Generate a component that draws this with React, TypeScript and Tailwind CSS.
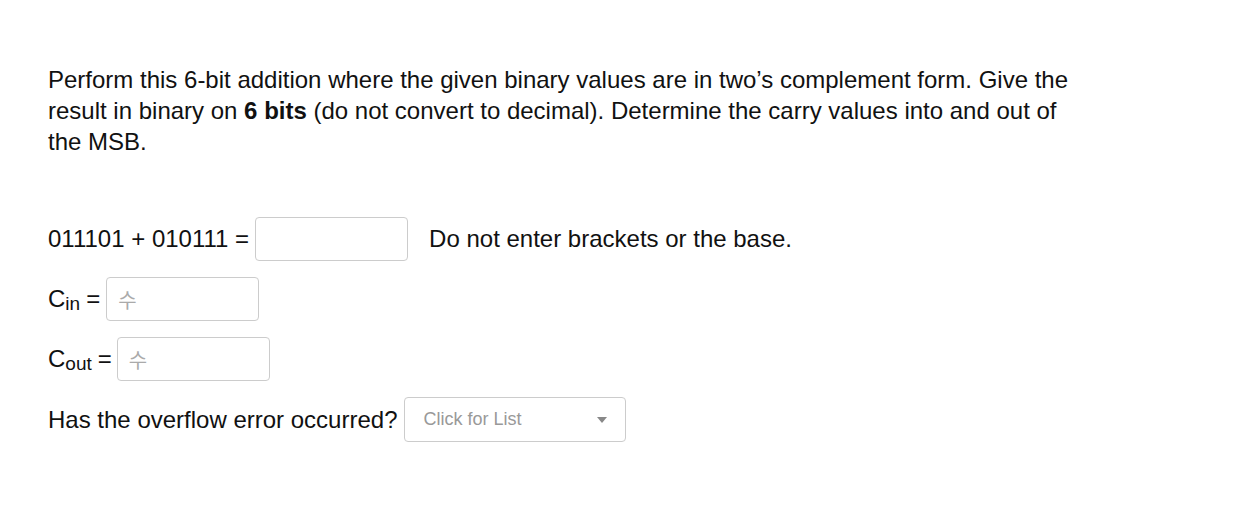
export default function App() {
  const box = 'h-[44px] w-[153px] rounded-[4px] border border-[#cccccc] bg-white';
  return (
    <div className="min-h-screen bg-white pl-[48px] pt-[64px] text-[24px] text-[#111] [font-family:'Liberation_Sans',Arial,sans-serif]">
      <p className="w-[1030px] leading-[31px]">
        Perform this 6-bit addition where the given binary values are in two’s complement form. Give the result in binary
        on <b>6 bits</b> (do not convert to decimal). Determine the carry values into and out of the MSB.
      </p>

      <div className="mt-[60px] flex flex-col gap-[16px]">
        <div className="flex items-center">
          <span>011101 + 010111 =</span>
          <input className={`ml-[6px] ${box}`} />
          <span className="ml-[21px]">Do not enter brackets or the base.</span>
        </div>

        <div className="flex items-center">
          <span>
            C<sub className="relative top-[3px] align-baseline text-[19px]">in</sub>
          </span>
          <span className="ml-[6px]">=</span>
          <input
            className={`ml-[6px] pl-[11px] text-[20px] placeholder:text-[#aaa] [font-family:'Noto_Sans_CJK_KR',sans-serif] ${box}`}
            placeholder="수"
          />
        </div>

        <div className="flex items-center">
          <span>
            C<sub className="relative top-[3px] align-baseline text-[19px]">out</sub>
          </span>
          <span className="ml-[6px]">=</span>
          <input
            className={`ml-[5px] pl-[11px] text-[20px] placeholder:text-[#aaa] [font-family:'Noto_Sans_CJK_KR',sans-serif] ${box}`}
            placeholder="수"
          />
        </div>

        <div className="flex items-center">
          <span>Has the overflow error occurred?</span>
          <div className="ml-[7px] flex h-[45px] w-[222px] items-center justify-between rounded-[4px] border border-[#cccccc] bg-white pl-[18px] pr-[18px]">
            <span className="text-[18px] text-[#999]">Click for List</span>
            <svg width="10" height="6" viewBox="0 0 10 6">
              <path d="M0 0h10L5 6z" fill="#888" />
            </svg>
          </div>
        </div>
      </div>
    </div>
  );
}
